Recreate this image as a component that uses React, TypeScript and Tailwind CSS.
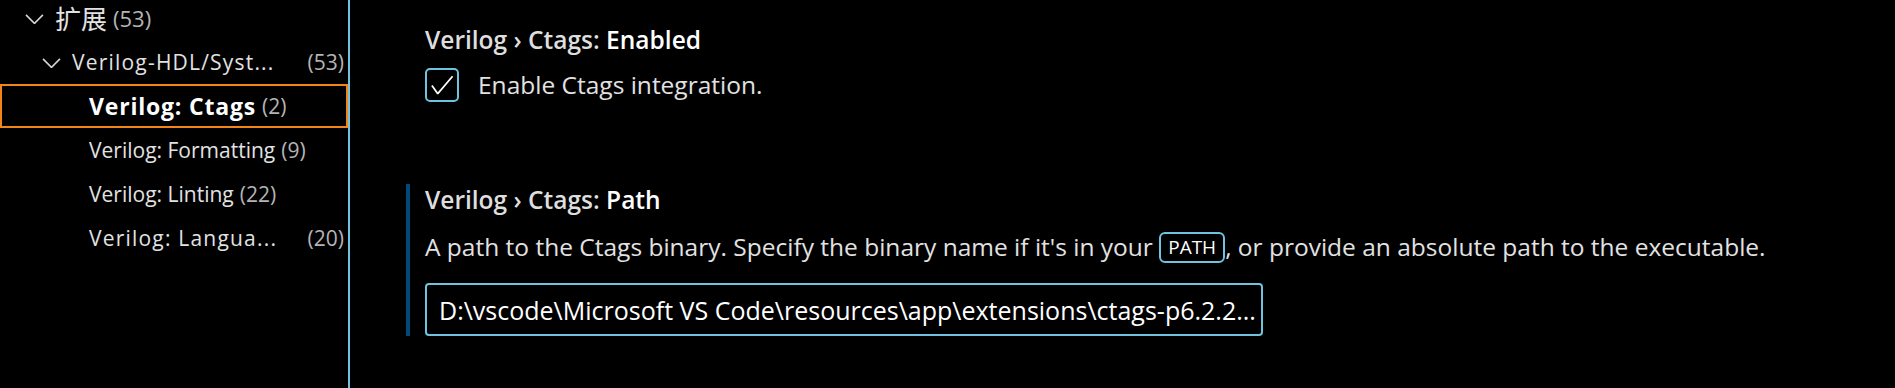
import React from "react";

const Chevron = () => (
  <svg width="29" height="29" viewBox="0 0 16 16" fill="#d4d4d4" className="shrink-0">
    <path d="M7.976 10.072l4.357-4.357.62.618L8.284 11h-.618L3 6.333l.619-.618 4.357 4.357z" />
  </svg>
);

type Row = {
  level: number;
  label: string;
  count: string;
  twistie?: boolean;
  selected?: boolean;
  spread?: boolean;
  cjk?: boolean;
};

const rows: Row[] = [
  { level: 1, label: "扩展", count: "(53)", twistie: true, cjk: true },
  { level: 2, label: "Verilog-HDL/Syst...", count: "(53)", twistie: true, spread: true },
  { level: 3, label: "Verilog: Ctags", count: "(2)", selected: true },
  { level: 3, label: "Verilog: Formatting", count: "(9)" },
  { level: 3, label: "Verilog: Linting", count: "(22)" },
  { level: 3, label: "Verilog: Langua...", count: "(20)", spread: true },
];

const indent: Record<number, string> = {
  1: "pl-[20px]",
  2: "pl-[37px]",
  3: "pl-[54px]",
};

function labelClass(r: Row) {
  if (r.selected) return "text-white font-bold text-[23px] tracking-[0.8px]";
  if (r.cjk) return "text-[#e2e2e2] text-[26px] font-['Noto_Sans_CJK_SC',sans-serif]";
  if (r.spread) return "text-[#e2e2e2] tracking-[1.2px]";
  return "text-[#e2e2e2]";
}

function TocRow({ r }: { r: Row }) {
  return (
    <div
      className={
        "h-[44px] w-[348px] flex items-center whitespace-nowrap pr-[2px] " +
        indent[r.level] +
        (r.selected ? " border-2 border-[#f38518]" : " border-2 border-transparent")
      }
    >
      <div className="w-[29px] h-[29px] shrink-0 -ml-[2px] flex items-center">
        {r.twistie ? <Chevron /> : null}
      </div>
      <div className="w-[6px] shrink-0" />
      <span className={labelClass(r)}>{r.label}</span>
      {r.spread ? <div className="flex-1" /> : <span className="w-[6px]" />}
      <span className={"text-[#b4b4b4]" + (r.cjk ? " text-[22px]" : "")}>{r.count}</span>
    </div>
  );
}

export default function App() {
  return (
    <div className="w-[1895px] h-[388px] bg-black flex overflow-hidden font-['Open_Sans',sans-serif] leading-[32px]">
      <div className="w-[350px] shrink-0 h-full border-r-2 border-[#6fc3df] overflow-hidden text-[21px]">
        <div className="-mt-[4px] flex flex-col">
          {rows.map((r, i) => (
            <TocRow key={i} r={r} />
          ))}
        </div>
      </div>

      <div className="flex-1 flex flex-col pl-[56px] text-[24.5px]">
        <div className="pl-[19px] pt-[24px] flex flex-col">
          <div className="h-[32px] font-semibold whitespace-nowrap">
            <span className="text-[#dedede]">Verilog › Ctags: </span>
            <span className="text-white">Enabled</span>
          </div>
          <div className="mt-[12px] h-[34px] flex items-center">
            <div className="w-[34px] h-[34px] border-2 border-[#6fc3df] rounded-[5px] flex items-center justify-center shrink-0">
              <svg width="28" height="28" viewBox="0 0 16 16" fill="#ffffff">
                <path d="M14.431 3.323l-8.47 10-.79-.036-3.35-4.77.818-.574 2.978 4.24 8.051-9.506.764.646z" />
              </svg>
            </div>
            <span className="ml-[19px] text-[#e2e2e2]">Enable Ctags integration.</span>
          </div>
        </div>

        <div className="mt-[82px] flex">
          <div className="w-[4px] bg-[#00497a] shrink-0" />
          <div className="pl-[15px] flex flex-col">
            <div className="h-[32px] font-semibold whitespace-nowrap">
              <span className="text-[#dedede]">Verilog › Ctags: </span>
              <span className="text-white">Path</span>
            </div>
            <div className="mt-[15px] h-[32px] flex items-center whitespace-nowrap text-[#e2e2e2]">
              <span>A path to the Ctags binary. Specify the binary name if it's in your&nbsp;</span>
              <span className="inline-flex items-center h-[31px] px-[7px] border-2 border-[#6fc3df] rounded-[6px] text-[19px] text-white">
                PATH
              </span>
              <span>, or provide an absolute path to the executable.</span>
            </div>
            <div className="mt-[20px] w-[838px] h-[53px] border-2 border-[#6fc3df] rounded-[4px] flex items-center pl-[12px] text-white text-[25px] whitespace-nowrap overflow-hidden">
              D:\vscode\Microsoft VS Code\resources\app\extensions\ctags-p6.2.2...
            </div>
          </div>
        </div>
      </div>
    </div>
  );
}
